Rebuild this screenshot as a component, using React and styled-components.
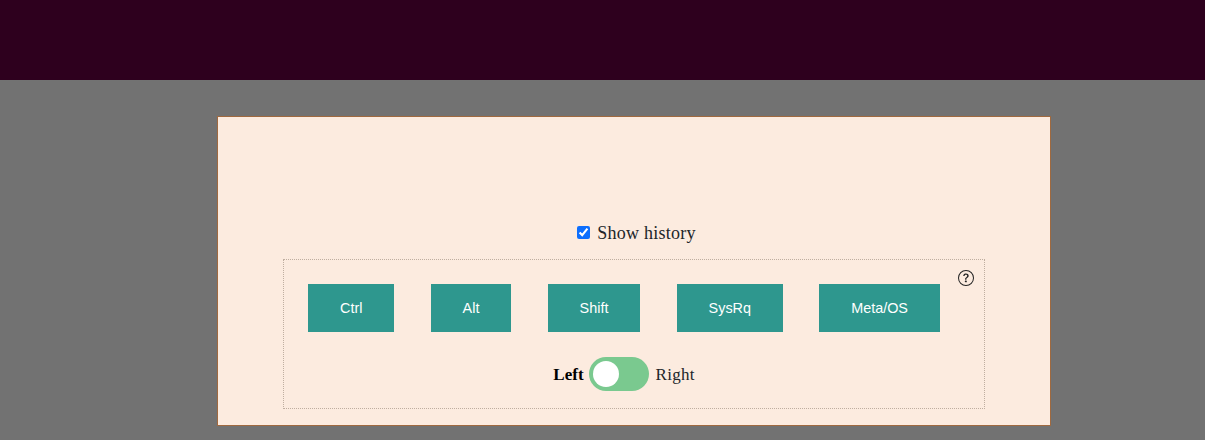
import React, { useState } from "react";
import styled, { createGlobalStyle } from "styled-components";
import { BsQuestionCircle } from "react-icons/bs";

const GlobalStyle = createGlobalStyle`
  html, body {
    margin: 0;
    padding: 0;
    height: 440px;
    overflow: hidden;
    background: #727272;
    font-family: "Liberation Serif", serif;
  }
`;

const Header = styled.header`
  height: 80px;
  background: #2e001e;
`;

const Main = styled.main`
  display: flex;
  justify-content: center;
  padding: 36px 154px 0 217px;
`;

const Panel = styled.section`
  box-sizing: border-box;
  width: 834px;
  height: 310px;
  padding: 0 65px 16px;
  display: flex;
  flex-direction: column;
  justify-content: flex-end;
  background: #fcebdf;
  border: 1px solid #a0693f;
`;

const HistoryRow = styled.label`
  display: flex;
  justify-content: center;
  align-items: center;
  gap: 7px;
  margin-bottom: 15px;
  padding-left: 5px;
  font-size: 18px;
  line-height: 22px;
  letter-spacing: 0.25px;
  color: #212529;

  input {
    width: 13px;
    height: 13px;
    margin: 0 0 2px;
    accent-color: #0d6efd;
  }
`;

const KeyBox = styled.div`
  position: relative;
  box-sizing: border-box;
  height: 150px;
  padding: 24px 44px 0 24px;
  border: 1px dotted #bfaea0;
`;

const HelpIcon = styled(BsQuestionCircle)`
  position: absolute;
  top: 10px;
  right: 10px;
  color: #222;
`;

const KeyRow = styled.div`
  display: flex;
  justify-content: space-between;
`;

const KeyButton = styled.button`
  height: 48px;
  padding: 0 32px;
  border: 0;
  background: #2e978e;
  color: #fff;
  font-family: "Liberation Sans", Arial, sans-serif;
  font-size: 14.4px;
`;

const SideRow = styled.div`
  display: flex;
  justify-content: center;
  align-items: center;
  gap: 6px;
  margin-top: 25px;
  font-size: 17px;
  color: #212529;
`;

const SideLabel = styled.span`
  padding-top: 2px;
  font-weight: ${(p) => (p.$active ? 700 : 400)};
  color: ${(p) => (p.$active ? "#000" : "#212529")};
  letter-spacing: ${(p) => (p.$active ? "0" : "0.25px")};
`;

const Track = styled.button`
  position: relative;
  width: 60px;
  height: 34px;
  margin: 0 1px 0 -1px;
  padding: 0;
  border: 0;
  border-radius: 17px;
  background: #7ac98f;
`;

const Knob = styled.span`
  position: absolute;
  top: 4px;
  left: ${(p) => (p.$right ? "30px" : "4px")};
  width: 26px;
  height: 26px;
  border-radius: 50%;
  background: #fff;
`;

export default function App() {
  const [showHistory, setShowHistory] = useState(true);
  const [right, setRight] = useState(false);
  const keys = ["Ctrl", "Alt", "Shift", "SysRq", "Meta/OS"];

  return (
    <>
      <GlobalStyle />
      <Header />
      <Main>
        <Panel>
          <HistoryRow>
            <input
              type="checkbox"
              checked={showHistory}
              onChange={(e) => setShowHistory(e.target.checked)}
            />
            Show history
          </HistoryRow>
          <KeyBox>
            <HelpIcon size={16} />
            <KeyRow>
              {keys.map((k) => (
                <KeyButton key={k}>{k}</KeyButton>
              ))}
            </KeyRow>
            <SideRow>
              <SideLabel $active={!right}>Left</SideLabel>
              <Track onClick={() => setRight(!right)}>
                <Knob $right={right} />
              </Track>
              <SideLabel $active={right}>Right</SideLabel>
            </SideRow>
          </KeyBox>
        </Panel>
      </Main>
    </>
  );
}
